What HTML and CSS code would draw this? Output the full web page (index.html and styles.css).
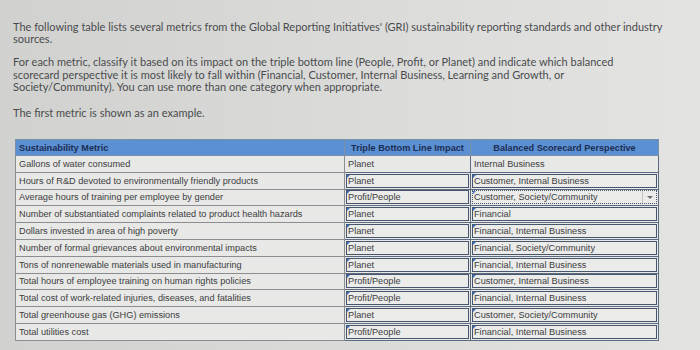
FILE: index.html
```html
<!DOCTYPE html>
<html lang="en">
<head>
    <meta charset="UTF-8">
    <title>GRI Metrics</title>
    <link rel="stylesheet" href="styles.css">
</head>
<body>
    <div class="question">
        <p class="lead">The following table lists several metrics from the Global Reporting Initiatives' (GRI) sustainability reporting standards and other industry sources.</p>
        <p>For each metric, classify it based on its impact on the triple bottom line (People, Profit, or Planet) and indicate which balanced scorecard perspective it is most likely to fall within (Financial, Customer, Internal Business, Learning and Growth, or Society/Community). You can use more than one category when appropriate.</p>
        <p>The first metric is shown as an example.</p>

        <table class="metrics">
            <thead>
                <tr>
                    <th class="metric">Sustainability Metric</th>
                    <th class="impact">Triple Bottom Line Impact</th>
                    <th class="perspective">Balanced Scorecard Perspective</th>
                </tr>
            </thead>
            <tbody>
                <tr class="example">
                    <td>Gallons of water consumed</td>
                    <td><span class="plain">Planet</span></td>
                    <td><span class="plain">Internal Business</span></td>
                </tr>
                <tr>
                    <td>Hours of R&amp;D devoted to environmentally friendly products</td>
                    <td><span class="entry">Planet</span></td>
                    <td><span class="entry">Customer, Internal Business</span></td>
                </tr>
                <tr>
                    <td>Average hours of training per employee by gender</td>
                    <td><span class="entry">Profit/People</span></td>
                    <td><span class="entry focus">Customer, Society/Community<span class="arrow"></span></span></td>
                </tr>
                <tr>
                    <td>Number of substantiated complaints related to product health hazards</td>
                    <td><span class="entry">Planet</span></td>
                    <td><span class="entry">Financial</span></td>
                </tr>
                <tr>
                    <td>Dollars invested in area of high poverty</td>
                    <td><span class="entry">Planet</span></td>
                    <td><span class="entry">Financial, Internal Business</span></td>
                </tr>
                <tr>
                    <td>Number of formal grievances about environmental impacts</td>
                    <td><span class="entry">Planet</span></td>
                    <td><span class="entry">Financial, Society/Community</span></td>
                </tr>
                <tr>
                    <td>Tons of nonrenewable materials used in manufacturing</td>
                    <td><span class="entry">Planet</span></td>
                    <td><span class="entry">Financial, Internal Business</span></td>
                </tr>
                <tr>
                    <td>Total hours of employee training on human rights policies</td>
                    <td><span class="entry">Profit/People</span></td>
                    <td><span class="entry">Customer, Internal Business</span></td>
                </tr>
                <tr>
                    <td>Total cost of work-related injuries, diseases, and fatalities</td>
                    <td><span class="entry">Profit/People</span></td>
                    <td><span class="entry">Financial, Internal Business</span></td>
                </tr>
                <tr>
                    <td>Total greenhouse gas (GHG) emissions</td>
                    <td><span class="entry">Planet</span></td>
                    <td><span class="entry">Customer, Society/Community</span></td>
                </tr>
                <tr>
                    <td>Total utilities cost</td>
                    <td><span class="entry">Profit/People</span></td>
                    <td><span class="entry">Financial, Internal Business</span></td>
                </tr>
            </tbody>
        </table>
    </div>
</body>
</html>
```

FILE: styles.css
```css
body {
    margin: 0;
    background: linear-gradient(to right, #d1d2d0, #dcdddb 60%, #e3e4e1);
    font-family: Lato, "Open Sans", sans-serif;
    color: #4a4b4d;
    height: 350px;
    overflow: hidden;
}
.question {
    padding: 21px 0 0 13px;
}
.question p {
    font-size: 11px;
    line-height: 12.5px;
    width: 645px;
    margin: 0 0 13px 0;
}
.question p.lead {
    width: 662px;
    line-height: 11.5px;
    margin-bottom: 12px;
}
.metrics {
    border-collapse: collapse;
    margin: 20px 0 0 2px;
    width: 644px;
    font-family: "Liberation Sans", Arial, sans-serif;
    font-size: 9.2px;
    color: #3c3d40;
}
.metrics th {
    background-color: #5b90d2;
    color: #1b2e55;
    font-weight: bold;
    height: 15px;
    padding: 0 3px;
    border: 1px solid #7d8fa8;
    text-align: center;
}
.metrics th.metric {
    text-align: left;
    width: 322px;
}
.metrics th.impact {
    width: 119px;
}
.metrics td {
    background-color: #e8e8e7;
    border: 1px solid #8b8d90;
    height: 15.8px;
    padding: 0 3px;
    white-space: nowrap;
}
.metrics td + td {
    padding: 0 1px;
    border-color: #5d6b80;
}
.plain {
    display: block;
    padding-left: 2px;
}
.entry {
    position: relative;
    display: block;
    height: 12px;
    line-height: 12px;
    padding-left: 1px;
    border: 1px solid #48566d;
    background-color: #ebebea;
}
.entry::before {
    content: "";
    position: absolute;
    top: 0;
    left: 0;
    border-top: 3px solid #3c6fc0;
    border-right: 3px solid transparent;
}
.entry.focus {
    border: 1px dotted #48566d;
}
.arrow {
    position: absolute;
    right: 0;
    top: 0;
    width: 13px;
    height: 12px;
    border-left: 1px solid #c2c4c6;
}
.arrow::after {
    content: "";
    position: absolute;
    left: 4px;
    top: 5px;
    border-top: 3px solid #6e7278;
    border-left: 3px solid transparent;
    border-right: 3px solid transparent;
}
```
